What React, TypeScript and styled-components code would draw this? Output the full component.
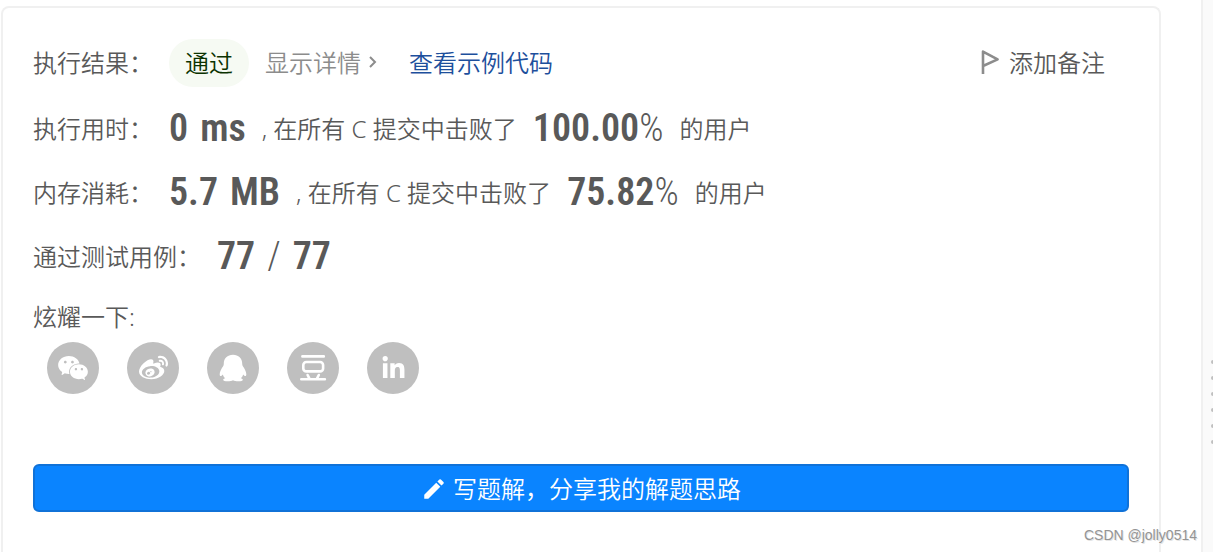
import React from 'react';
import styled, { createGlobalStyle } from 'styled-components';
import { AiFillWechat } from 'react-icons/ai';
import { FaWeibo, FaLinkedinIn } from 'react-icons/fa';
import { MdEdit } from 'react-icons/md';

const GlobalStyle = createGlobalStyle`
  * { box-sizing: border-box; }
  body {
    margin: 0;
    overflow-x: hidden;
    background: #fff;
    color: #595959;
    font-family: 'Noto Sans', 'Noto Sans CJK SC', sans-serif;
    font-size: 24px;
    font-weight: 350;
    line-height: 32px;
  }
  button { font: inherit; color: inherit; background: none; border: 0; padding: 0; cursor: pointer; }
  a { text-decoration: none; }
`;

const Page = styled.div`
  position: relative;
  display: flex;
  min-height: 100vh;
`;

const Main = styled.main`
  flex: 1;
  min-width: 0;
  display: flex;
  padding: 6px 40px 0 1px;
`;

const Card = styled.section`
  flex: 1;
  min-width: 0;
  padding: 30px 30px 32px;
  border: 2px solid #f0f0f0;
  border-bottom: 0;
  border-radius: 8px 8px 0 0;
`;

const Row = styled.div`
  display: flex;
  align-items: center;
  height: 64px;
  white-space: nowrap;
`;

const ResultRow = styled(Row)`
  height: 50px;
  margin-bottom: 9px;
`;

const Label = styled.span`
  margin-right: 16px;
`;

const Status = styled.span`
  padding: 8px 16px;
  border-radius: 24px;
  background: #f6faf3;
  color: #0b3200;
  margin-right: 16px;
`;

const DetailButton = styled.button`
  display: flex;
  align-items: center;
  gap: 8px;
  color: #8c8c8c;
  margin-right: 32px;
`;

const CodeLink = styled.a`
  color: #1d4f9c;
`;

const NoteButton = styled.button`
  display: flex;
  align-items: center;
  gap: 8px;
  margin: 0 24px 0 auto;
`;

const Stat = styled.span`
  display: flex;
  gap: 12px;
  margin-right: 16px;
  padding-bottom: 2px;
  font-family: 'Roboto Condensed', Roboto, sans-serif;
  font-size: 38px;
  font-weight: 600;
  line-height: 40px;
`;

const Light = styled.span`
  font-weight: 300;
`;

const Phrase = styled.span`
  margin-right: 16px;
`;

const ShareTitle = styled.p`
  margin: 12px 0 9px;
`;

const ShareList = styled.div`
  display: flex;
  gap: 28px;
  padding-left: 14px;
`;

const ShareButton = styled.button`
  display: grid;
  place-items: center;
  width: 52px;
  height: 52px;
  border-radius: 50%;
  background: #bfbfbf;
  color: #fff;
`;

const WriteButton = styled.button`
  display: flex;
  align-items: center;
  justify-content: center;
  gap: 6px;
  width: 100%;
  height: 48px;
  margin-top: 70px;
  padding-top: 2px;
  border: 2px solid #1072d8;
  border-radius: 6px;
  background: #0a84ff;
  color: #fff;
`;

const Splitter = styled.aside`
  display: flex;
  flex-direction: column;
  align-items: flex-end;
  gap: 12px;
  width: 12px;
  padding-top: 360px;
  overflow: hidden;
  border-left: 2px solid #f0f0f0;
  background: #fafafa;
`;

const Dot = styled.i`
  flex: none;
  width: 4px;
  height: 4px;
  margin-right: -2px;
  border-radius: 50%;
  background: #bfbfbf;
`;

const Watermark = styled.span`
  position: absolute;
  right: 16px;
  bottom: 8px;
  color: #949494;
  font-family: 'Liberation Sans', sans-serif;
  font-size: 14px;
  font-weight: 400;
  line-height: 18px;
  text-shadow: 1px 1px 0 #e4e4e4;
`;

const ChevronIcon = () => (
  <svg width="8" height="14" viewBox="0 0 8 14" fill="none" stroke="#8c8c8c" strokeWidth="2">
    <path d="M1 1l5 5-5 5" />
  </svg>
);

const FlagIcon = () => (
  <svg width="20" height="26" viewBox="0 0 20 26" fill="none" stroke="#8c8c8c" strokeWidth="2.6">
    <path d="M2 24V1.600L16.600 9.400 2 16" strokeLinejoin="round" />
  </svg>
);

const QqIcon = () => (
  <svg width="28" height="28" viewBox="0 0 28 28" fill="#fff">
    <path d="M14 .8C8.400.8 4.800 4.600 4.800 9.600c0 1-.1 1.600-.5 2.400C2.400 14.800.7 17.600.7 20.200c0 1 .3 1.800.9 1.800.9 0 1.700-.8 2.300-1.600.4 1.600 1.200 2.800 2.300 3.900-1.300.4-2 .8-2 1.500 0 1.100 1.900 1.500 4.500 1.500 2.200 0 4.100-.4 5.300-1 1.200.6 3.100 1 5.300 1 2.600 0 4.500-.4 4.500-1.500 0-.7-.7-1.100-2-1.500 1.100-1.100 1.900-2.300 2.300-3.900.6.8 1.400 1.600 2.300 1.600.6 0 .9-.8.9-1.800 0-2.600-1.700-5.400-3.600-8.200-.4-.8-.5-1.400-.5-2.400C23.200 4.600 19.600.8 14 .8z" />
  </svg>
);

const DoubanIcon = () => (
  <svg width="28" height="28" viewBox="0 0 28 28" fill="none" stroke="#fff" strokeWidth="2.600" strokeLinecap="round">
    <path d="M3.400 2.400h21.400M2.300 25.300h23.600" />
    <rect x="4.300" y="8" width="19.800" height="9.400" rx="3" />
    <path d="M8.600 21l1.800 3.600M19.800 21l-1.800 3.600" />
  </svg>
);

const shares = [
  { name: '微信', icon: <AiFillWechat size={34} /> },
  { name: '微博', icon: <FaWeibo size={29} /> },
  { name: 'QQ', icon: <QqIcon /> },
  { name: '豆瓣', icon: <DoubanIcon /> },
  { name: 'LinkedIn', icon: <FaLinkedinIn size={25} /> },
];

const metrics = [
  { label: '执行用时：', value: '0', unit: 'ms', percent: '100.00' },
  { label: '内存消耗：', value: '5.7', unit: 'MB', percent: '75.82' },
];

export default function App() {
  return (
    <Page>
      <GlobalStyle />
      <Main>
        <Card>
          <ResultRow>
            <Label>执行结果：</Label>
            <Status>通过</Status>
            <DetailButton type="button">
              显示详情
              <ChevronIcon />
            </DetailButton>
            <CodeLink href="#code">查看示例代码</CodeLink>
            <NoteButton type="button">
              <FlagIcon />
              添加备注
            </NoteButton>
          </ResultRow>
          {metrics.map((m) => (
            <Row key={m.label}>
              <Label>{m.label}</Label>
              <Stat>
                <span>{m.value}</span>
                <span>{m.unit}</span>
              </Stat>
              <Phrase>, 在所有 C 提交中击败了</Phrase>
              <Stat>
                <span>
                  {m.percent}
                  <Light>%</Light>
                </span>
              </Stat>
              <span>的用户</span>
            </Row>
          ))}
          <Row>
            <Label>通过测试用例：</Label>
            <Stat>
              <span>77</span>
              <Light>/</Light>
              <span>77</span>
            </Stat>
          </Row>
          <ShareTitle>炫耀一下:</ShareTitle>
          <ShareList>
            {shares.map((s) => (
              <ShareButton key={s.name} type="button" aria-label={s.name}>
                {s.icon}
              </ShareButton>
            ))}
          </ShareList>
          <WriteButton type="button">
            <MdEdit size={26} />
            写题解，分享我的解题思路
          </WriteButton>
        </Card>
      </Main>
      <Splitter>
        {[0, 1, 2, 3, 4, 5].map((n) => (
          <Dot key={n} />
        ))}
      </Splitter>
      <Watermark>CSDN @jolly0514</Watermark>
    </Page>
  );
}
